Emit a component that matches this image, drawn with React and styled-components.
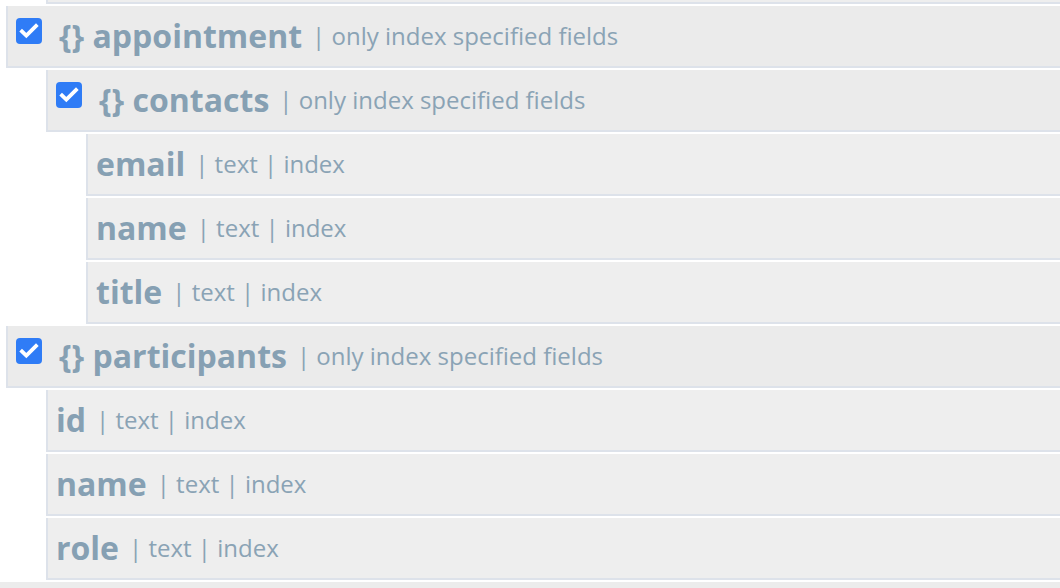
import React from "react";
import styled, { createGlobalStyle } from "styled-components";

const Global = createGlobalStyle`
  html, body { margin: 0; padding: 0; background: #ffffff; }
  body { font-family: "Open Sans", "Liberation Sans", sans-serif; }
  #root { width: 1060px; height: 588px; overflow: hidden; }
`;

const Viewport = styled.div`
  width: 1060px;
  height: 588px;
  overflow: hidden;
  background: #ffffff;
`;

const List = styled.div`
  padding-left: ${(p) => p.$indent}px;
`;

const Row = styled.div`
  display: flex;
  align-items: center;
  box-sizing: border-box;
  height: 62px;
  margin-top: 2px;
  padding: 0 0 2px 8px;
  background: ${(p) => (p.$object ? "#ebebeb" : "#eeeeee")};
  border-left: 2px solid #dde2ea;
  border-bottom: 2px solid #dde2ea;
  white-space: nowrap;
`;

const StubRow = styled.div`
  box-sizing: border-box;
  height: 4px;
  background: #eeeeee;
  border-left: 2px solid #dde2ea;
  border-bottom: 2px solid #dde2ea;
`;

const Box = styled.span`
  flex: none;
  align-self: flex-start;
  width: 26px;
  height: 26px;
  border-radius: 4px;
  background: #2f7cf6;
  display: flex;
  align-items: center;
  justify-content: center;
  margin: 12px 17px 0 0;
`;

const Name = styled.span`
  font-weight: 700;
  font-size: 32px;
  color: #86a0b3;
`;

const Meta = styled.span`
  font-weight: 400;
  font-size: 24px;
  color: #8aa3b5;
  margin-left: 10px;
`;

const NextSection = styled.div`
  margin-top: 2px;
  height: 40px;
  background: #ececec;
`;

const tree = [
  {
    name: "appointment",
    children: [
      {
        name: "contacts",
        children: [
          { name: "email" },
          { name: "name" },
          { name: "title" },
        ],
      },
    ],
  },
  {
    name: "participants",
    children: [{ name: "id" }, { name: "name" }, { name: "role" }],
  },
];

function Check() {
  return (
    <Box role="checkbox" aria-checked="true">
      <svg width="26" height="26" viewBox="0 0 26 26">
        <path
          d="M6 13.5 L10.3 17.6 L20 8"
          fill="none"
          stroke="#ffffff"
          strokeWidth="3.8"
          strokeLinecap="square"
        />
      </svg>
    </Box>
  );
}

function Node({ node }) {
  const isObject = !!node.children;
  return (
    <div>
      <Row $object={isObject}>
        {isObject && <Check />}
        <Name>{isObject ? `{} ${node.name}` : node.name}</Name>
        <Meta>
          {isObject ? "| only index specified fields" : "| text | index"}
        </Meta>
      </Row>
      {isObject && (
        <List $indent={40}>
          {node.children.map((c, i) => (
            <Node key={i} node={c} />
          ))}
        </List>
      )}
    </div>
  );
}

export default function App() {
  return (
    <Viewport>
      <Global />
      <List $indent={6}>
        <List $indent={40}>
          <StubRow />
        </List>
        {tree.map((n, i) => (
          <Node key={i} node={n} />
        ))}
      </List>
      <NextSection />
    </Viewport>
  );
}
